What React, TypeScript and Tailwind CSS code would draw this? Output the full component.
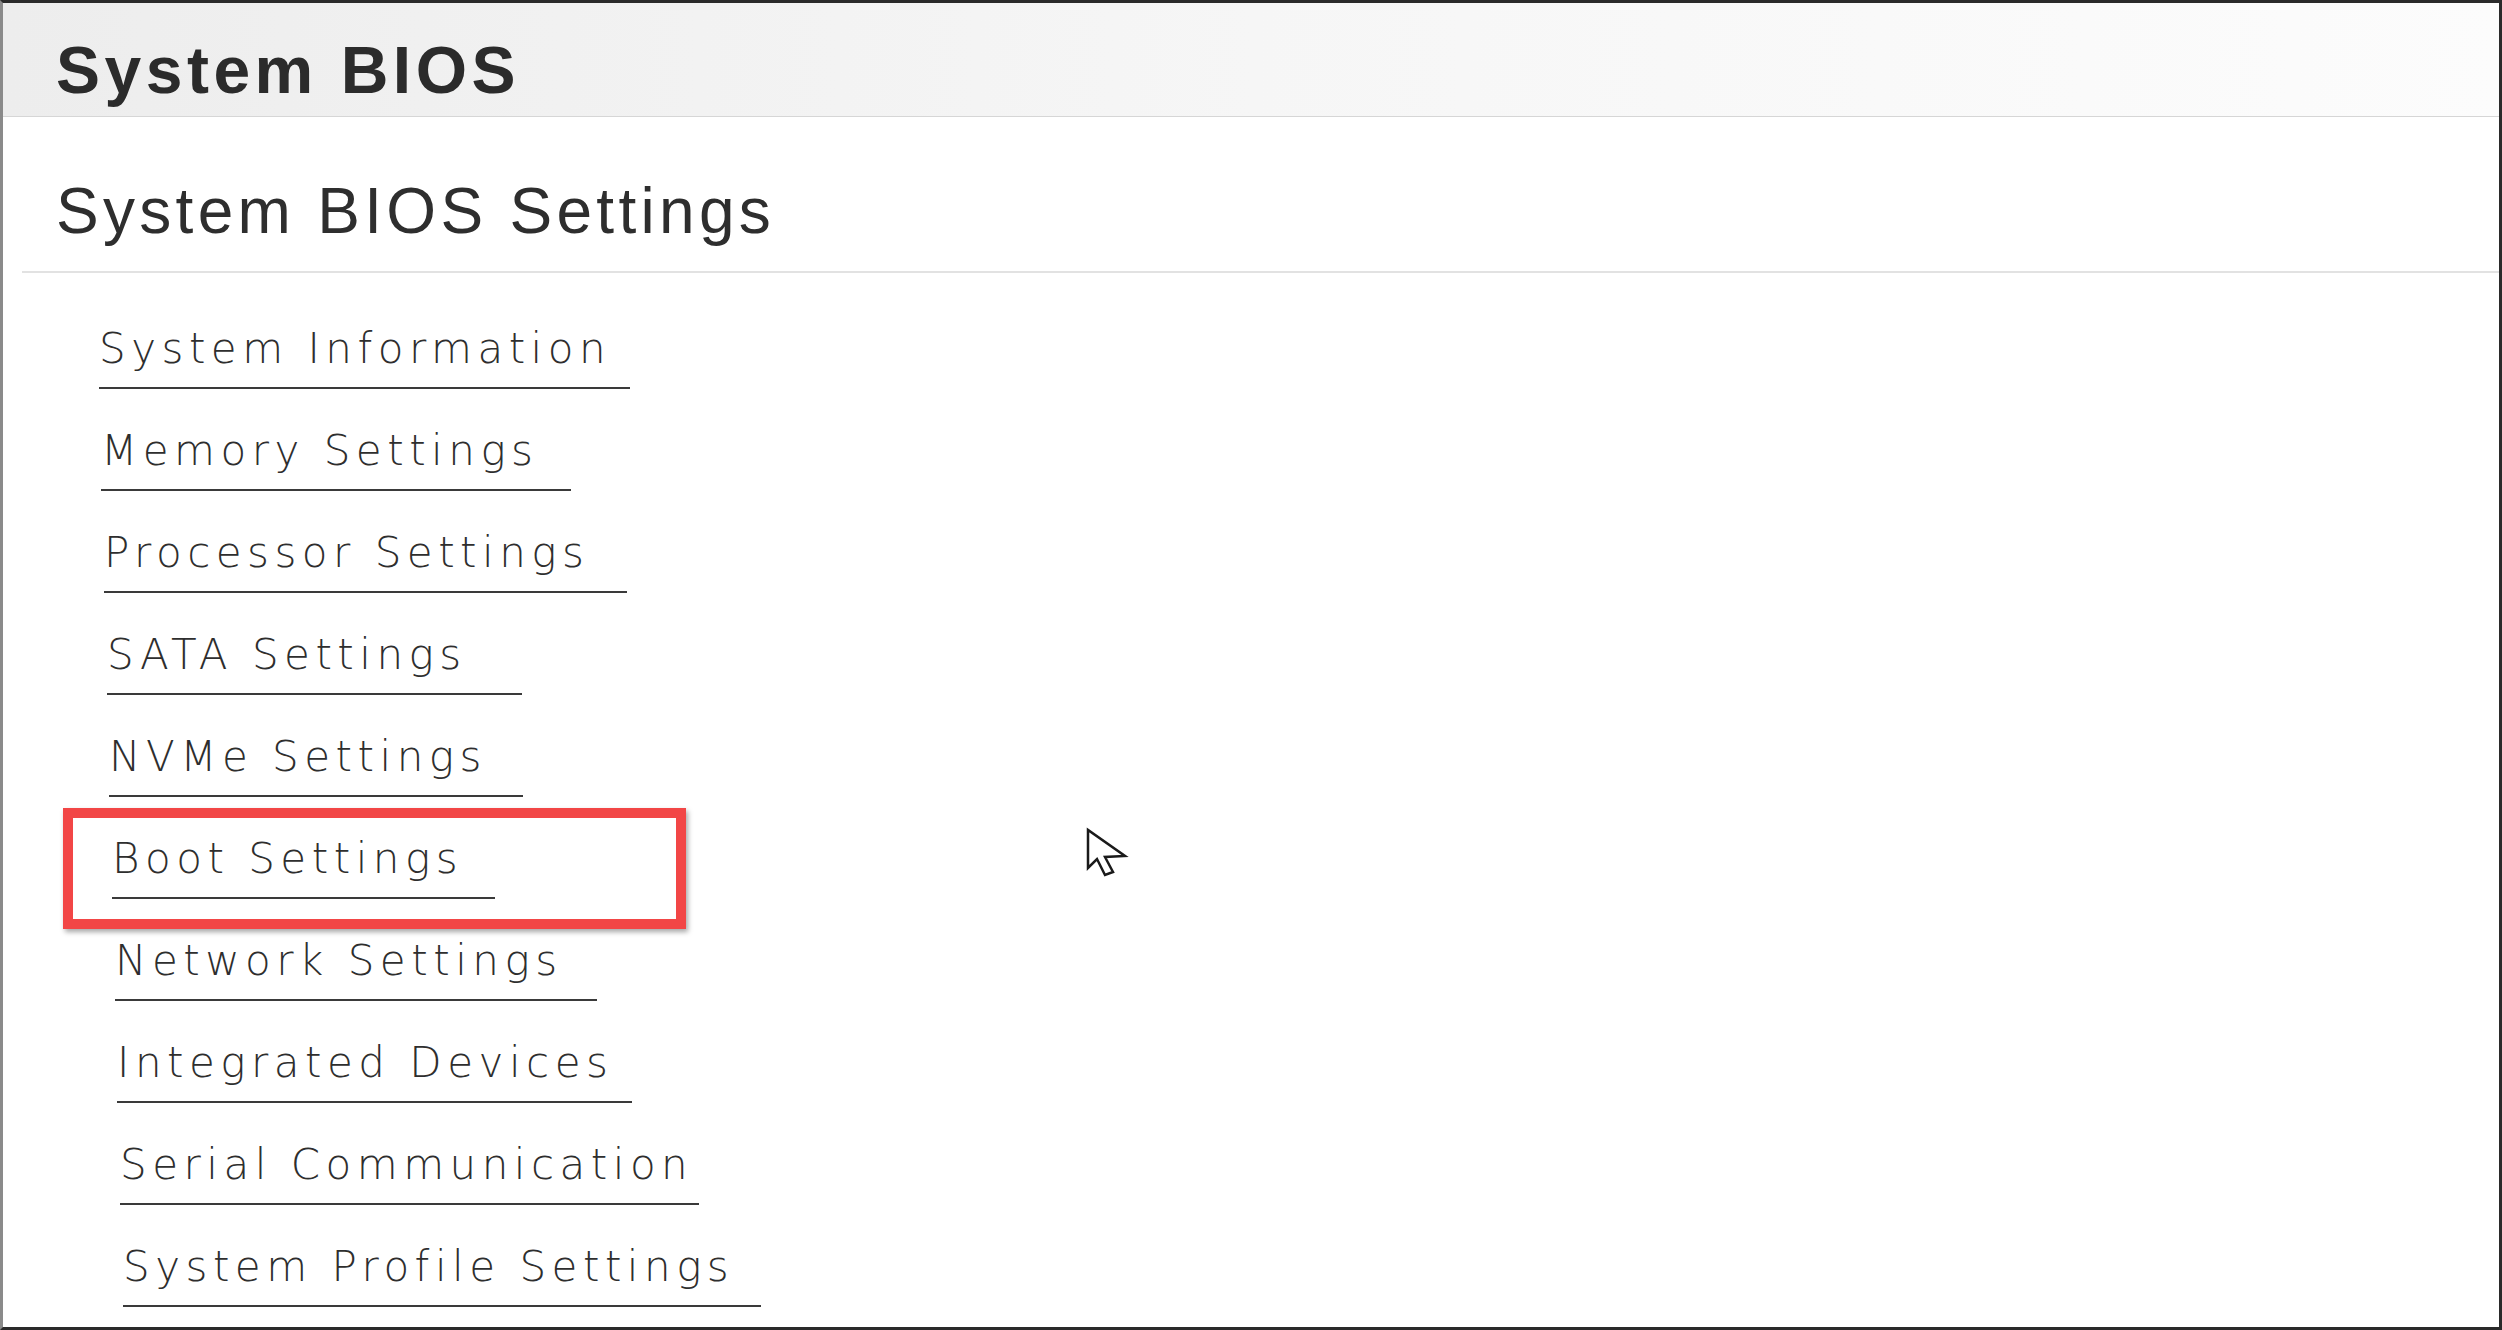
import React from "react";

const items: { label: string; ml: string; w: string; boxed?: boolean }[] = [
  { label: "System Information", ml: "ml-[96px]", w: "w-[531px]" },
  { label: "Memory Settings", ml: "ml-[98px]", w: "w-[470px]" },
  { label: "Processor Settings", ml: "ml-[101px]", w: "w-[523px]" },
  { label: "SATA Settings", ml: "ml-[104px]", w: "w-[415px]" },
  { label: "NVMe Settings", ml: "ml-[106px]", w: "w-[414px]" },
  { label: "Boot Settings", ml: "ml-[109px]", w: "w-[383px]", boxed: true },
  { label: "Network Settings", ml: "ml-[112px]", w: "w-[482px]" },
  { label: "Integrated Devices", ml: "ml-[114px]", w: "w-[515px]" },
  { label: "Serial Communication", ml: "ml-[117px]", w: "w-[579px]" },
  { label: "System Profile Settings", ml: "ml-[120px]", w: "w-[638px]" },
];

function Cursor() {
  return (
    <svg width="44" height="52" viewBox="0 0 44 52" className="absolute left-[1082px] top-[824px]">
      <path
        d="M3 3 L3 41 L12 32 L20 48 L28 45 L20 30 L40 29 Z"
        fill="white"
        stroke="#1a1a1a"
        strokeWidth="2.5"
        strokeLinejoin="miter"
      />
    </svg>
  );
}

export default function App() {
  return (
    <div className="relative w-[2502px] h-[1330px] overflow-hidden bg-white border-[3px] border-[#2a2a2a] border-l-[#8a8a8a] font-['Liberation_Sans',Arial,sans-serif]">
      <div className="h-[114px] border-b border-[#d6d6d6] bg-linear-to-r from-[#ededed] via-[#f6f6f6] to-[#fcfcfc] pl-[53px] pt-[34px]">
        <div className="text-[66px] leading-[66px] font-bold tracking-[4.5px] text-[#2b2b2b]">System BIOS</div>
      </div>
      <div className="ml-[19px] pl-[34px] pt-[62px] pb-[28px] border-b-2 border-[#e2e2e2]">
        <div className="text-[64px] leading-[64px] tracking-[4.3px] text-[#2e2e2e]">System BIOS Settings</div>
      </div>
      <div className="flex flex-col gap-[37px] pt-[51px]">
        {items.map((it) => (
          <div key={it.label} className={`${it.ml} relative`}>
            <div className={`${it.w} border-b-2 border-[#3a3a3a] pb-[13px] text-[42px] leading-[50px] tracking-[5.5px] font-light text-[#2e2e2e] font-['DejaVu_Sans','Liberation_Sans',sans-serif] whitespace-nowrap`}>
              {it.label}
            </div>
            {it.boxed && (
              <div className="absolute left-[-49px] top-[-26px] w-[623px] h-[121px] border-[10px] border-[#f24646] shadow-[2px_3px_5px_rgba(0,0,0,0.35)]" />
            )}
          </div>
        ))}
      </div>
      <Cursor />
    </div>
  );
}
